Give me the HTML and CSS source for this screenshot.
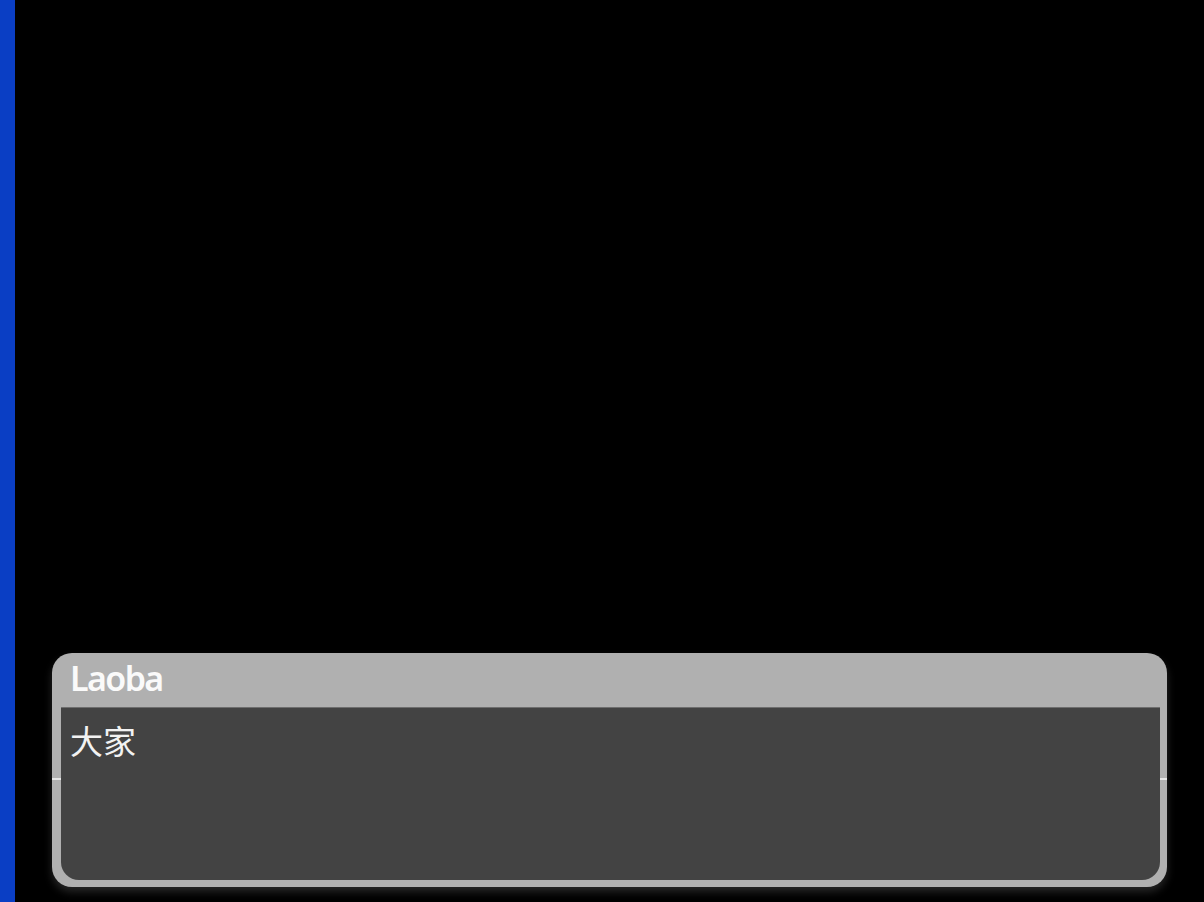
FILE: index.html
```html
<!DOCTYPE html>
<html>
<head>
<meta charset="utf-8">
<link rel="stylesheet" href="styles.css">
</head>
<body>
<div class="screen">
  <div class="strip"></div>
  <div class="stage">
    <div class="dialog">
      <div class="name">Laoba</div>
      <div class="text">大家</div>
    </div>
  </div>
</div>
</body>
</html>
```
FILE: styles.css
```css
html, body {
  margin: 0;
  padding: 0;
  background: #000;
}
.screen {
  display: flex;
  width: 1204px;
  height: 902px;
  overflow: hidden;
}
.strip {
  width: 15px;
  flex: none;
  background: #0a3ec4;
}
.stage {
  flex: 1;
  display: flex;
  flex-direction: column;
  justify-content: flex-end;
  padding: 0 0 15px 37px;
}
.dialog {
  position: relative;
  width: 1115px;
  height: 234px;
  box-sizing: border-box;
  background: #b0b0b0;
  border-radius: 20px;
  padding: 0 7px 7px 9px;
  display: flex;
  flex-direction: column;
  box-shadow: 0 5px 8px rgba(70, 70, 70, 0.55);
}
.dialog::before {
  content: "";
  position: absolute;
  left: 0;
  right: 0;
  top: 125px;
  height: 2px;
  background: #e6e6e6;
}
.name {
  height: 54px;
  flex: none;
  box-sizing: border-box;
  padding: 4px 0 0 9px;
  font-family: "Noto Sans", "Open Sans", sans-serif;
  font-weight: 600;
  font-size: 34px;
  line-height: 42px;
  color: #fafafa;
  letter-spacing: -1.6px;
}
.text {
  position: relative;
  flex: 1;
  background: #434343;
  border-top: 1px solid #6e6e6e;
  border-radius: 0 0 18px 18px;
  padding: 10px 0 0 9px;
  font-family: "Noto Sans CJK SC", "Noto Sans", sans-serif;
  font-size: 33px;
  line-height: 44px;
  color: #f2f2f2;
}
```
